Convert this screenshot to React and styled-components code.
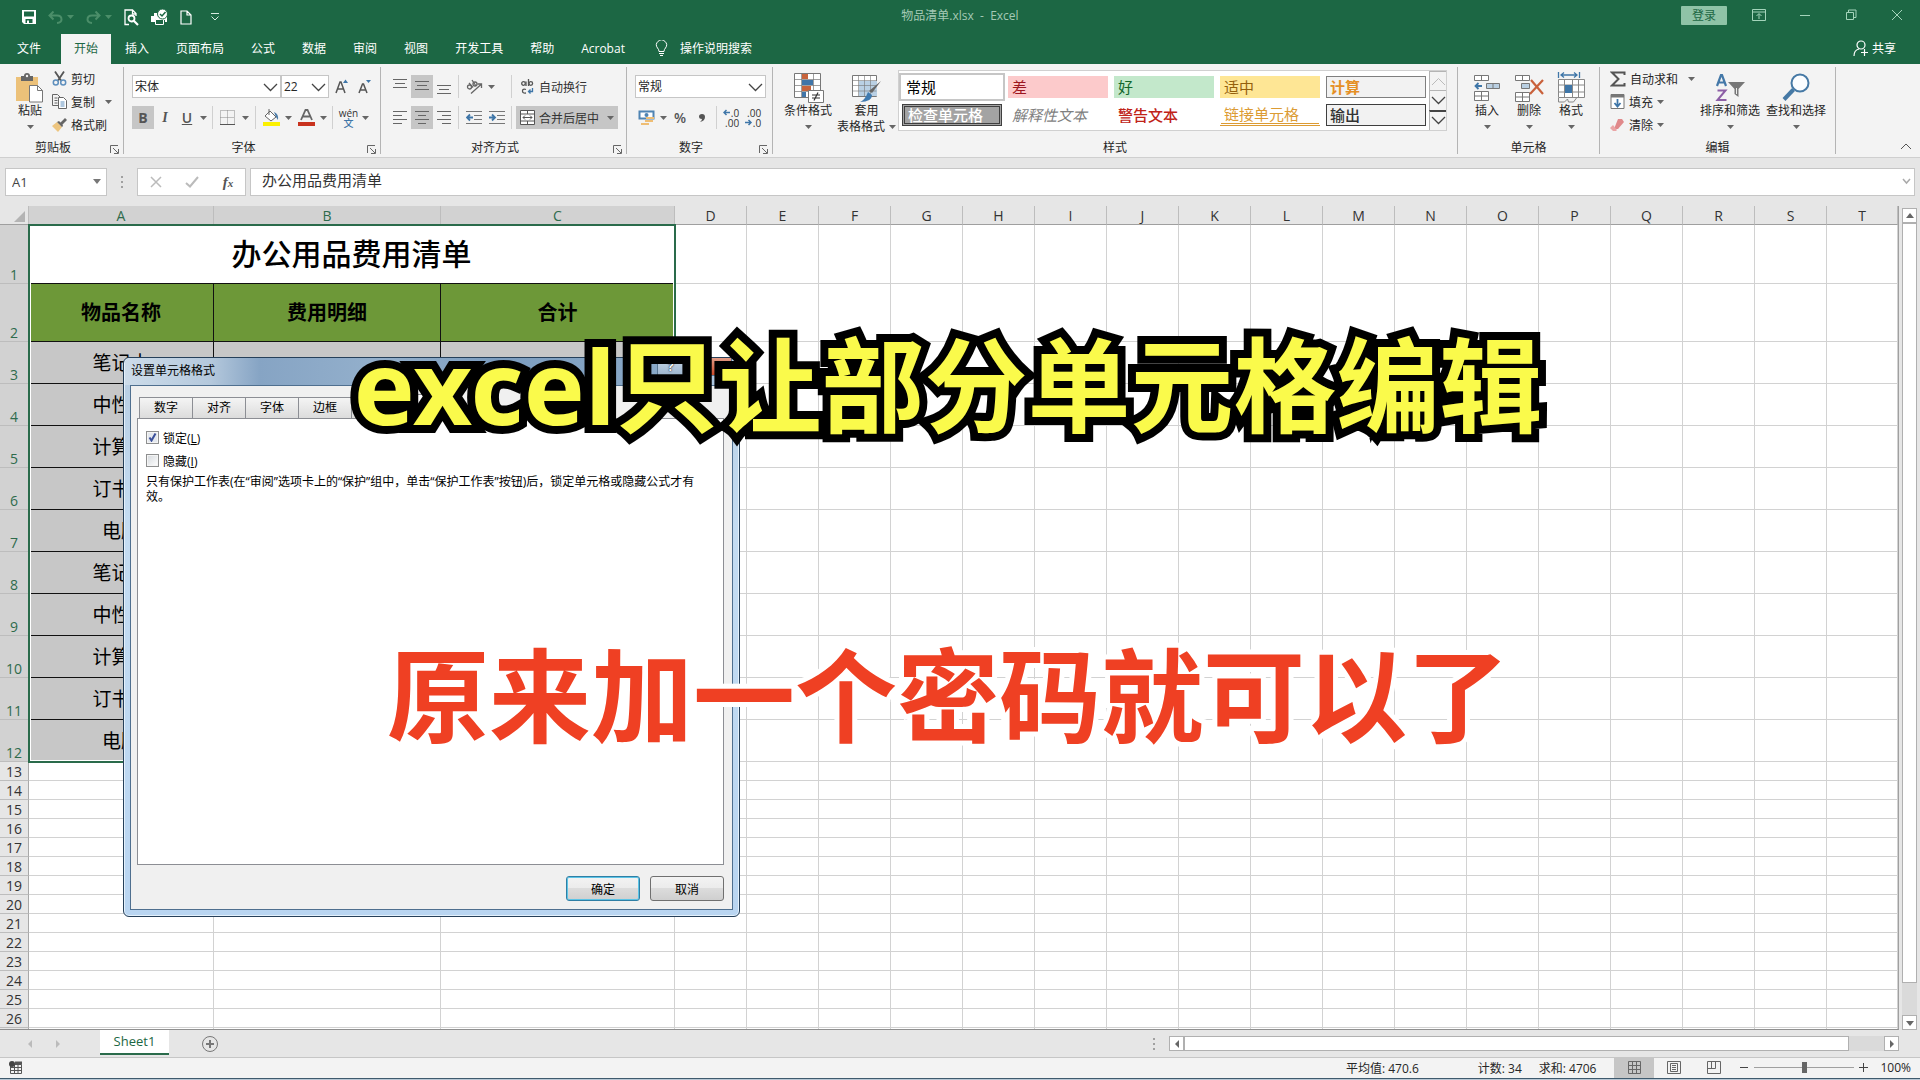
import React, { useState } from 'react';
import styled, { createGlobalStyle, css } from 'styled-components';

const GlobalStyle = createGlobalStyle`
  * {
    box-sizing: border-box;
  }

  body {
    margin: 0;
    overflow: hidden;
    font-family: "Open Sans", "Noto Sans CJK SC", sans-serif;
    font-size: 12px;
    color: #262626;
  }

  button, input, select {
    font: inherit;
    color: inherit;
  }

  button {
    padding: 0;
    border: 0;
    background: none;
    white-space: nowrap;
  }
`;

const MENU = ['插入', '页面布局', '公式', '数据', '审阅', '视图', '开发工具', '帮助', 'Acrobat'];

const COLUMNS = 'ABCDEFGHIJKLMNOPQRST'.split('');
const COLUMN_WIDTHS = { A: 185, B: 227, C: 234 };

const ROWS = [
  { height: 59, cells: ['办公用品费用清单'] },
  { height: 58, cells: ['物品名称', '费用明细', '合计'] },
  { height: 42, cells: ['笔记本', '', ''] },
  { height: 42, cells: ['中性笔', '', ''] },
  { height: 42, cells: ['计算器', '', ''] },
  { height: 42, cells: ['订书机', '', ''] },
  { height: 42, cells: ['电脑', '', ''] },
  { height: 42, cells: ['笔记本', '', ''] },
  { height: 42, cells: ['中性笔', '', ''] },
  { height: 42, cells: ['计算器', '', ''] },
  { height: 42, cells: ['订书机', '', ''] },
  { height: 42, cells: ['电脑', '', ''] },
];
const EMPTY_ROWS = Array.from({ length: 15 }, (_, i) => i + 13);

const CELL_STYLES = [
  { name: '常规', kind: 'normal' },
  { name: '差', kind: 'bad' },
  { name: '好', kind: 'good' },
  { name: '适中', kind: 'neutral' },
  { name: '计算', kind: 'calc' },
  { name: '检查单元格', kind: 'check' },
  { name: '解释性文本', kind: 'explain' },
  { name: '警告文本', kind: 'warning' },
  { name: '链接单元格', kind: 'linked' },
  { name: '输出', kind: 'output' },
];

/* ---------- icons ---------- */

const Svg = ({ w = 16, h = w, children, ...rest }) => (
  <svg width={w} height={h} viewBox={`0 0 ${w} ${h}`} fill="none" stroke="currentColor" aria-hidden="true" {...rest}>
    {children}
  </svg>
);

const Arrow = ({ color = '#666' }) => (
  <Svg w={7} h={4} stroke="none"><path d="M0 0h7L3.5 4z" fill={color} /></Svg>
);

const Chevron = ({ color = '#444' }) => (
  <Svg w={15} h={9} stroke={color} strokeWidth="1.3"><path d="M1 1l6.5 6.5L14 1" /></Svg>
);

const SaveIcon = () => (
  <Svg w={14} stroke="none">
    <path fillRule="evenodd" fill="#fff" d="M0 0h14v14H2l-2-2zM2 1.5v5h10v-5zM3.5 9v4H5v-2.500h2V13h3.500V9z" />
  </Svg>
);

const UndoIcon = ({ flip }) => (
  <Svg w={15} h={13} stroke="#4b8e69" strokeWidth="2">
    <g transform={flip ? 'translate(15 0) scale(-1 1)' : undefined}>
      <path d="M5.500 0.500L1.500 4.500l4 4M2 4.500h7q4.500 0 4.500 4 0 3-4.500 3.500" />
    </g>
  </Svg>
);

const PreviewIcon = () => (
  <Svg w={15} h={17} stroke="#fff" strokeWidth="1.3">
    <path d="M5 15.500H1V1h7.500L12 4.500V7M8.500 1v4H12" />
    <circle cx="7.500" cy="9.500" r="3" strokeWidth="1.800" />
    <path d="M10 12l4 4" strokeWidth="2.200" />
  </Svg>
);

const PrintIcon = () => (
  <Svg w={17} h={17} stroke="none">
    <path d="M0 7h3V4h4v3h9v6h-2v-2H4v2H0z" fill="#fff" />
    <path d="M4.500 10.500h8v5h-8z" stroke="#fff" fill="#1c6744" />
    <circle cx="11.500" cy="5" r="5" fill="#fff" stroke="#1c6744" />
    <path d="M9 5l2 2 3.500-4" stroke="#1c6744" strokeWidth="1.500" />
  </Svg>
);

const FileIcon = () => (
  <Svg w={12} h={15} stroke="#fff" strokeWidth="1.200"><path d="M1 1h6l4 4v9H1zM7 1v4h4" /></Svg>
);

const PasteIcon = () => (
  <Svg w={30} h={30}>
    <path d="M1 4h22v24H1z" fill="#ecc179" stroke="none" />
    <path d="M6 3h3q0-3 3-3t3 3h3v5H6z" fill="#666" stroke="none" />
    <circle cx="12" cy="3" r="1.200" fill="#f3f3f3" stroke="none" />
    <path d="M14.500 12.500h8l5 5v11.500h-13z" fill="#fff" stroke="#777" />
    <path d="M22.500 12.500v5h5" stroke="#777" />
  </Svg>
);

const CutIcon = () => (
  <Svg w={15} h={15} strokeWidth="1.500">
    <path d="M3 0.500l6 9M12 0.500l-6 9" stroke="#555" strokeWidth="1.800" />
    <circle cx="3.800" cy="11.500" r="2.500" stroke="#5e8fbd" />
    <circle cx="11.200" cy="11.500" r="2.500" stroke="#5e8fbd" />
  </Svg>
);

const CopyIcon = () => (
  <Svg w={15} h={15} stroke="#666">
    <path d="M6 11.500H0.500v-11h5l2.500 2.500M2.500 4h3M2.500 6.500h3M2.500 9h3" />
    <path d="M6.500 3.500h5l3 3v8h-8z" fill="#fff" />
    <path d="M8.500 8h4M8.500 10h4M8.500 12h4" stroke="#5e8fbd" />
  </Svg>
);

const BrushIcon = () => (
  <Svg w={15} h={14} stroke="none">
    <path d="M0 8l5-4 5 5-4 5z" fill="#edc57f" />
    <path d="M5 4l2-1 1.500 1.500L13 0l2 2-4.500 4.500L11 8l-1 1z" fill="#666" />
  </Svg>
);

const LauncherIcon = () => (
  <Svg w={9} h={9} stroke="#666"><path d="M0.500 8V0.500H8M3 3l5 5M8.500 4v4.500H4" /></Svg>
);

const BordersIcon = () => (
  <Svg w={15} h={15} stroke="#888">
    <path d="M0.500 0.500h14v14H0.500zM7.500 0.500v14M0.500 7.500h14" strokeDasharray="1 1" />
    <path d="M0 14.500h15" stroke="#555" />
  </Svg>
);

const FillIcon = () => (
  <Svg w={17} h={17}>
    <path d="M7 2l6 6-5 4-6-5z" fill="#fff" stroke="#666" />
    <path d="M6 0v6" stroke="#666" />
    <path d="M11 3q5 2 4 8l-2-3z" fill="#4a7ba8" stroke="none" />
    <path d="M0 13h17v4H0z" fill="#fbf000" stroke="none" />
  </Svg>
);

const FontColorIcon = () => (
  <Svg w={17} h={17} stroke="none">
    <path d="M3 11L7.500 1h2L14 11M5 7.500h7" stroke="#666" strokeWidth="1.800" />
    <path d="M0 13h17v4H0z" fill="#c8321e" />
  </Svg>
);

const SizeIcon = ({ down }) => (
  <Svg w={14} h={15}>
    <path d={down ? 'M1 14L4.500 5h1L9 14M2.500 11h5' : 'M1 14L5 3h1l4 11M2.500 10h6'} stroke="#555" strokeWidth="1.500" />
    <path d={down ? 'M8 1h5l-2.500 3z' : 'M8 4h5l-2.500-3.500z'} fill="#3f76a8" stroke="none" />
  </Svg>
);

/* [start, end, y] of every text line in an alignment icon */
const lineSets = {
  top: [[0, 14, 1], [2, 12, 5], [0, 14, 9]],
  middle: [[0, 14, 3], [2, 12, 7], [0, 14, 11]],
  bottom: [[0, 14, 7], [2, 12, 11], [0, 14, 15]],
  left: [[0, 14, 2], [0, 9, 6], [0, 14, 10], [0, 9, 14]],
  center: [[0, 14, 2], [3, 11, 6], [0, 14, 10], [3, 11, 14]],
  right: [[0, 14, 2], [5, 14, 6], [0, 14, 10], [5, 14, 14]],
};

const AlignIcon = ({ kind }) => (
  <Svg w={14} h={17} stroke="#666">
    {lineSets[kind].map(([a, b, y]) => <path key={y} d={`M${a} ${y + 0.5}H${b}`} />)}
  </Svg>
);

const OrientIcon = () => (
  <Svg w={17} h={16} stroke="#666" strokeWidth="1.300">
    <circle cx="3.500" cy="8" r="2" /><path d="M3 4l4 4.500M6 1l4 6" /><circle cx="9" cy="5" r="2" />
    <path d="M5 14.500l10-9M15.500 9V5h-4" />
  </Svg>
);

const IndentIcon = ({ out }) => (
  <Svg w={16} h={13} stroke="#777">
    <path d="M0 0.500h16M8 4.500h8M8 8.500h8M0 12.500h16" />
    <path d={out ? 'M7 6.500H1M4 3.500L1 6.500l3 3' : 'M0 6.500h6M3 3.500l3 3-3 3'} stroke="#3f76a8" strokeWidth="1.800" />
  </Svg>
);

const WrapIcon = () => (
  <Svg w={13} h={15} stroke="#555" strokeWidth="1.300">
    <circle cx="2.500" cy="4.500" r="1.800" /><path d="M5 2.500v4.500M7.500 0v7" /><circle cx="9.800" cy="4.500" r="1.800" />
    <path d="M5 10.500q-3.500-1-3.500 1.500t3.500 2" />
    <path d="M11.500 9v3.500H8M9.500 10.500l-2 2 2 2" stroke="#3f76a8" />
  </Svg>
);

const MergeIcon = () => (
  <Svg w={15} h={15} stroke="#555">
    <path d="M0.500 0.500h14v14H0.500z" fill="#fff" />
    <path d="M0.500 4h14M0.500 11h14M7.500 0.500V4M7.500 11v3.500M3 7.500h9M5 5.500l-2 2 2 2M10 5.500l2 2-2 2" />
  </Svg>
);

const MoneyIcon = () => (
  <Svg w={17} h={16} stroke="none">
    <path d="M1.500 1.500h14v7h-14z" stroke="#4f84b3" strokeWidth="2" fill="#fff" />
    <circle cx="8.500" cy="5" r="2" fill="#4f84b3" />
    <path d="M8 7h8v2H8zM7 10h8v2H7zM3 13h8v2H3z" fill="#eebd74" />
  </Svg>
);

const CommaIcon = () => (
  <Svg w={6} h={8} stroke="none"><path d="M3 0q3 0 3 3 0 4-5 5 2-1.500 2-3-3 0-3-2.500Q0 0 3 0z" fill="#555" /></Svg>
);

const CondIcon = () => (
  <Svg w={31} h={30} stroke="#777">
    <path d="M1.500 0.500h26v24h-26z" fill="#fff" />
    <path d="M9 1h6v5H9zM9 13h9v5H9z" fill="#c8643c" stroke="none" />
    <path d="M9 7h11v5H9zM9 19h4v5H9z" fill="#4175a8" stroke="none" />
    <path d="M8.500 0.500v24M20.500 0.500v24M1.500 6.500h26M1.500 12.500h26M1.500 18.500h26" opacity=".7" />
    <path d="M15.500 17.500h15v12h-15z" fill="#fff" />
    <path d="M19 22h8M19 25h8M25 19.500l-4 8" stroke="#333" strokeWidth="1.200" />
  </Svg>
);

const TableStyleIcon = () => (
  <Svg w={30} h={30} stroke="#777">
    <path d="M0.500 2.500h24v21h-24z" fill="#fff" />
    <path d="M7 8h18v15H7z" fill="#b9d0e4" stroke="none" />
    <path d="M6.500 2.500v21M12.500 2.500v21M18.500 2.500v21M0.500 7.500h24M0.500 12.500h24M0.500 18h24" opacity=".6" />
    <path d="M29 8L20 20l-3-2z" fill="#666" stroke="none" />
    <path d="M16 19l4 3q0 7-12 7 5-2 8-10z" fill="#3f7ab0" stroke="none" />
  </Svg>
);

const InsertIcon = () => (
  <Svg w={28} h={28} stroke="#777">
    <path d="M1.500 1.500h14v5h-14zM8.500 1.500v5M1.500 17.500h14v9h-14zM8.500 17.500v9M1.500 22h14" fill="#fff" />
    <path d="M13.500 9.500h13v5h-13z" fill="#b9cfe2" /><path d="M20 9.500v5" />
    <path d="M9 12H3M5.500 9L2.500 12l3 3" stroke="#3f76a8" strokeWidth="1.800" />
  </Svg>
);

const DeleteIcon = () => (
  <Svg w={30} h={28} stroke="#777">
    <path d="M1.500 1.500h14v5h-14zM8.500 1.500v5M1.500 18.500h14v9h-14zM8.500 18.500v9M1.500 23h14" fill="#fff" />
    <path d="M7.500 9.500h8v5h-8z" fill="#b9cfe2" />
    <path d="M17 6l12 14M29 6L16 20" stroke="#c9613b" strokeWidth="2.200" />
  </Svg>
);

const FormatIcon = () => (
  <Svg w={29} h={31} stroke="#888">
    <path d="M1.500 7.500h26v18h-26z" fill="#fff" />
    <path d="M1.500 13h26M1.500 20h26M7.500 7.500v18M15.500 7.500v18M21.500 7.500v18" />
    <path d="M8 13h7v8H8z" fill="#3f76a8" stroke="none" />
    <path d="M1.500 26v4h6l3-3 1 3h5l3-4" />
    <path d="M1.500 0v6M22.500 0v6M4 3h16M7 0.500L4 3l3 2.500M17 0.500L20 3l-3 2.500" stroke="#3f76a8" strokeWidth="1.300" />
  </Svg>
);

const SumIcon = () => (
  <Svg w={16} h={16} stroke="#555" strokeWidth="2"><path d="M14.500 4V1.500H2L8.500 8 2 14.500h12.500V12" /></Svg>
);

const DownIcon = () => (
  <Svg w={15} h={15} stroke="#777">
    <path d="M1 0.500h13v14H1z" fill="#fff" /><path d="M1 2h13" strokeWidth="3" />
    <path d="M7.500 5v7M4.500 9l3 3.500 3-3.500" stroke="#3f76a8" strokeWidth="1.800" />
  </Svg>
);

const EraserIcon = () => (
  <Svg w={15} h={14} stroke="none">
    <path d="M8 1h4l2 3-6 7H4z" fill="#e0898b" /><path d="M3 7l4 5-1 1H3L0 10z" fill="#eaa5a6" />
  </Svg>
);

const SortIcon = () => (
  <Svg w={31} h={28}>
    <path d="M2 12L6 1h1l4 11M3.500 8.500h6" stroke="#4478a8" strokeWidth="2.200" />
    <path d="M2.500 16.500h8L2.500 26h9" stroke="#8d5fa6" strokeWidth="2" />
    <path d="M13 8h17l-6.500 7v8l-4-3v-5z" fill="#777" stroke="none" /><path d="M21.500 14v6" stroke="#eee" />
  </Svg>
);

const FindIcon = () => (
  <Svg w={28} h={29} stroke="#4679a5">
    <circle cx="18" cy="10" r="8.500" strokeWidth="2" fill="#fbfdff" />
    <path d="M11.500 16.500L2 26.500" strokeWidth="4" />
  </Svg>
);

/* ---------- styled parts ---------- */

const Page = styled.div`
  display: flex;
  flex-direction: column;
  height: 100vh;
  background: #e6e6e6;
`;

const TitleBar = styled.header`
  display: grid;
  grid-template-columns: 1fr auto 1fr;
  align-items: center;
  height: 34px;
  padding: 0 16px 4px;
  background: #1c6744;
  color: #a4c9b5;
`;

const QuickAccess = styled.div`
  display: flex;
  align-items: center;
  gap: 12px;
  padding: 4px 0 0 6px;

  button {
    display: flex;
    align-items: center;
    gap: 4px;
    color: #d6eadf;
  }
`;

const WindowControls = styled.div`
  display: flex;
  align-items: center;
  justify-content: flex-end;
  gap: 32px;

  button {
    display: flex;
    color: #a4d4bb;
  }

  .login {
    margin-right: -7px;
    padding: 0 11px;
    line-height: 19px;
    border-radius: 1px;
    background: #8fc3a7;
    color: #1c6744;
  }
`;

const MenuBar = styled.nav`
  display: flex;
  gap: 1px;
  height: 30px;
  background: #1c6744;
  color: #fff;
`;

const MenuTab = styled.button`
  padding: 0 13px 2px;
  color: ${({ $active }) => ($active ? '#1c6744' : '#fff')};
  background: ${({ $active }) => ($active ? '#f3f3f3' : 'transparent')};

  &:first-child {
    padding: 0 19px 2px 17px;
  }
`;

const MenuAction = styled.button`
  display: flex;
  align-items: center;
  gap: ${({ $gap }) => $gap}px;
  padding: 0 ${({ $right }) => ($right ? 24 : 0)}px 2px ${({ $right }) => ($right ? 0 : 16)}px;
  margin-left: ${({ $right }) => ($right ? 'auto' : 0)};
  color: #fff;
`;

const Ribbon = styled.div`
  position: relative;
  display: flex;
  height: 94px;
  padding: 3px 0;
  overflow: hidden;
  background: #f3f3f3;
  border-bottom: 1px solid #cfcfcf;
`;

const Group = styled.section`
  position: relative;
  flex: none;
  width: ${({ $width }) => $width}px;
  border-right: 1px solid #b4b4b4;
`;

const GroupBody = styled.div`
  display: flex;
  height: 73px;
  padding: 0 0 0 ${({ $pad = 8 }) => $pad}px;
`;

const GroupFooter = styled.div`
  display: flex;
  align-items: center;
  line-height: 16px;

  span {
    flex: 1;
    text-align: center;
  }

  button {
    display: flex;
    padding: 2px 4px 0;
  }
`;

const ToolRows = styled.div`
  display: flex;
  flex-direction: column;
  gap: 8px;
  padding-top: 8px;
`;

const ToolRow = styled.div`
  display: flex;
  align-items: center;
  height: 23px;
`;

const Tool = styled.button`
  display: flex;
  align-items: center;
  justify-content: center;
  gap: ${({ $gap = 5 }) => $gap}px;
  width: ${({ $width = 22 }) => $width}px;
  height: 23px;
  color: #333;
  background: ${({ $on }) => ($on ? '#c6c6c6' : 'transparent')};
`;

const Letter = styled.span`
  font-size: 14px;
  font-weight: ${({ $kind }) => ($kind === 'bold' ? 700 : 600)};
  font-style: ${({ $kind }) => ($kind === 'italic' ? 'italic' : 'normal')};
  font-family: ${({ $kind }) => ($kind === 'italic' ? '"Liberation Serif", serif' : 'inherit')};
  text-decoration: ${({ $kind }) => ($kind === 'underline' ? 'underline' : 'none')};
  color: #555;
`;

const Pinyin = styled.span`
  display: flex;
  flex-direction: column;
  align-items: center;
  font-size: 10px;
  line-height: 10px;

  b {
    color: #3f76a8;
    font-weight: 500;
  }
`;

const Decimals = styled.span`
  display: flex;
  flex-direction: column;
  align-items: flex-end;
  font-size: 10px;
  line-height: 10px;

  span {
    display: flex;
    align-items: center;
  }
`;

const Divider = styled.span`
  width: 1px;
  height: 23px;
  margin: 0 ${({ $after = 3 }) => $after}px 0 ${({ $before = 3 }) => $before}px;
  background: #d0d0d0;
`;

const SelectBox = styled.label`
  position: relative;
  display: block;
  width: ${({ $width }) => $width}px;
  height: 23px;

  select {
    appearance: none;
    width: 100%;
    height: 23px;
    padding: 0 2px;
    border: 1px solid #c6c6c6;
    border-radius: 0;
    background: #fff;
  }

  svg {
    position: absolute;
    right: 3px;
    top: 8px;
    pointer-events: none;
  }
`;

const SmallTools = styled.div`
  display: flex;
  flex-direction: column;
`;

const SmallTool = styled.button`
  display: flex;
  align-items: center;
  gap: 4px;
  height: 23px;

  svg:last-child {
    margin-left: ${({ $spread }) => ($spread ? 6 : 0)}px;
  }
`;

const BigTool = styled.button`
  display: flex;
  flex-direction: column;
  align-items: center;
  flex: none;
  width: ${({ $width = 42 }) => $width}px;
  padding-top: 5px;
  line-height: 16px;

  .pic {
    display: flex;
    align-items: center;
    height: 31px;
  }

  .more {
    display: flex;
    align-items: center;
    gap: 4px;
    height: 15px;
  }
`;

const Gallery = styled.div`
  display: flex;
  height: 61px;
  margin-top: 3px;
  background: #fff;
  border: 1px solid #d0d0d0;
`;

const GalleryGrid = styled.div`
  display: grid;
  grid-template-columns: repeat(5, 100px);
  grid-auto-rows: 22px;
  gap: 6px;
  padding: 5px 3px;
`;

const swatches = {
  normal: css`color: #000; outline: 2px solid #c6c6c6; outline-offset: 1px;`,
  bad: css`color: #9c1620; background: #fccacb;`,
  good: css`color: #13672b; background: #c3e8cb;`,
  neutral: css`color: #94600c; background: #fee695;`,
  calc: css`color: #e58f25; font-weight: 700; background: #f2f2f2; border-color: #7f7f7f;`,
  check: css`color: #fff; font-weight: 500; background: #a3a3a3; border: 3px double #3f3f3f;`,
  explain: css`color: #7f7f7f; font-style: italic;`,
  warning: css`color: #c02318; font-weight: 500;`,
  linked: css`color: #dc9b33; border-bottom: 3px double #dc9b33;`,
  output: css`color: #333; font-weight: 500; background: #f2f2f2; border-color: #3f3f3f;`,
};

const Swatch = styled.button`
  padding: 0 3px;
  overflow: hidden;
  border: 1px solid transparent;
  font-size: 15px;
  line-height: 16px;
  text-align: left;
  ${({ $kind }) => swatches[$kind]}
`;

const GalleryScroll = styled.div`
  display: flex;
  flex-direction: column;
  width: 17px;
  background: #f3f3f3;

  button {
    flex: 1;
    display: flex;
    align-items: center;
    justify-content: center;
    border: 1px solid #b4b4b4;
    border-width: 1px 0 0 1px;
  }

  button:last-child {
    border-top: 2px solid #444;
  }
`;

const CollapseButton = styled.button`
  align-self: flex-end;
  margin: 0 8px 0 auto;
`;

const FormulaBar = styled.div`
  display: flex;
  align-items: center;
  height: 48px;
  padding: 0 5px 0 5px;
`;

const NameBox = styled.label`
  position: relative;
  width: 102px;
  height: 28px;

  input {
    width: 100%;
    height: 28px;
    padding: 0 6px;
    border: 1px solid #c6c6c6;
    background: #fff;
    font-size: 13px;
    color: #444;
  }

  svg {
    position: absolute;
    right: 6px;
    top: 11px;
  }
`;

const Dots = styled.span`
  width: 2px;
  height: 12px;
  margin: 0 14px 0 ${({ $end }) => ($end ? 'auto' : '14px')};
  background: repeating-linear-gradient(#a0a0a0 0 2px, transparent 2px 5px);
`;

const FormulaButtons = styled.div`
  display: flex;
  align-items: center;
  justify-content: space-around;
  width: 109px;
  height: 28px;
  margin-right: 4px;
  border: 1px solid #c6c6c6;
  background: #fff;

  button {
    display: flex;
  }
`;

const Fx = styled.span`
  font: italic 600 15px "Liberation Serif", serif;
  color: #555;

  small {
    font-size: 11px;
  }
`;

const FormulaInput = styled.label`
  position: relative;
  flex: 1;
  height: 28px;

  input {
    width: 100%;
    height: 28px;
    padding: 0 11px 5px;
    border: 1px solid #c6c6c6;
    background: #fff;
    font-size: 15px;
    color: #333;
  }

  svg {
    position: absolute;
    right: 4px;
    top: 10px;
  }
`;

const Sheet = styled.main`
  position: relative;
  flex: 1;
  display: flex;
  min-height: 0;
`;

const GridArea = styled.div`
  position: relative;
  flex: 1;
  overflow: hidden;
  border-right: 1px solid #a0a0a0;
  border-bottom: 1px solid #8f8f8f;
  background: #fff;
`;

const Grid = styled.table`
  table-layout: fixed;
  width: 100%;
  border-collapse: separate;
  border-spacing: 0;
  font-size: 14px;
  line-height: 16px;

  th, td {
    padding: 0;
    overflow: hidden;
    font-weight: 400;
  }
`;

const ColHead = styled.th`
  height: 19px;
  vertical-align: bottom;
  border-right: 1px solid #bdbdbd;
  border-bottom: 1px solid #9f9f9f;
  background: ${({ $on }) => ($on ? '#d2d2d2' : '#e6e6e6')};
  color: ${({ $on }) => ($on ? '#2e6b4c' : '#333')};

  svg {
    display: block;
  }
`;

const RowHead = styled.th`
  vertical-align: bottom;
  border-right: 1px solid #a8a8a8;
  border-bottom: 1px solid #bdbdbd;
  background: ${({ $on }) => ($on ? '#d2d2d2' : '#e6e6e6')};
  color: ${({ $on }) => ($on ? '#2e6b4c' : '#333')};
`;

const Cell = styled.td`
  border-right: 1px solid #d2d2d2;
  border-bottom: 1px solid #d2d2d2;
`;

const fills = { title: '#fff', head: '#6d9838', body: '#c7c7c7' };

const DataCell = styled.td`
  border-right: 1px solid #111;
  border-bottom: 1px solid #111;
  background: ${({ $kind }) => fills[$kind]};
  color: #000;
  text-align: center;
  font-size: ${({ $kind }) => ({ title: 30, head: 20, body: 19 }[$kind])}px;
  line-height: 30px;

  span {
    font-weight: ${({ $kind }) => ({ title: 500, head: 700, body: 400 }[$kind])};
  }
`;

/* green frame over the selected range A1:C12 */
const Selection = styled.div`
  position: absolute;
  left: 28px;
  top: 18px;
  width: 648px;
  height: 539px;
  border: 2px solid #2a6b4b;
  box-shadow: inset 0 0 0 1px #fff;
`;

const VScroll = styled.div`
  display: flex;
  flex-direction: column;
  width: 21px;
  padding: 2px 3px 0;

  button {
    display: flex;
    align-items: center;
    justify-content: center;
    height: 15px;
    border: 1px solid #b0b0b0;
    background: #fff;
  }

  .track {
    flex: 1;
    background: #dadada;
  }

  .thumb {
    height: 96%;
    border: 1px solid #b0b0b0;
    background: #fff;
  }
`;

const SheetBar = styled.div`
  display: flex;
  align-items: center;
  height: 27px;
  padding-right: 21px;
`;

const SheetNav = styled.div`
  display: flex;
  gap: 22px;
  width: 100px;
  padding-left: 27px;

  button {
    display: flex;
  }
`;

const SheetTab = styled.button`
  align-self: flex-start;
  width: 69px;
  height: 25px;
  padding-bottom: 2px;
  background: #fff;
  border-bottom: 2px solid #2a6b4b;
  font-size: 13px;
  font-weight: 500;
  color: #1c6744;
`;

const AddSheet = styled.button`
  display: flex;
  margin-left: 32px;
`;

const HScroll = styled.div`
  display: flex;
  width: 730px;
  height: 15px;

  button {
    display: flex;
    align-items: center;
    justify-content: center;
    width: 15px;
    border: 1px solid #b0b0b0;
    background: #fff;
  }

  .track {
    flex: 1;
    background: #dadada;
  }

  .thumb {
    width: 95%;
    height: 15px;
    border: 1px solid #b0b0b0;
    background: #fff;
  }
`;

const StatusBar = styled.footer`
  display: flex;
  align-items: center;
  height: 21px;
  padding: 0 9px 1px;
  background: #f3f3f3;
  border-top: 1px solid #c6c6c6;

  .record {
    margin-right: auto;
    display: flex;
  }
`;

const Stat = styled.span`
  margin-right: ${({ $gap }) => $gap}px;
`;

const ViewButton = styled.button`
  display: flex;
  align-items: center;
  justify-content: center;
  width: 40px;
  height: 20px;
  background: ${({ $on }) => ($on ? '#c6c6c6' : 'transparent')};
`;

const Zoom = styled.label`
  display: flex;
  align-items: center;
  gap: 5px;
  margin: 0 12px 0 6px;

  input {
    appearance: none;
    width: 100px;
    height: 14px;
    margin: 0;
    background: linear-gradient(#a0a0a0, #a0a0a0) center / 100% 1px no-repeat;
  }

  input::-webkit-slider-thumb {
    appearance: none;
    width: 5px;
    height: 11px;
    background: #666;
  }
`;

const TaskStrip = styled.div`
  height: 2px;
  background: #3f5a6d;
  border-bottom: 1px solid #b7c7d4;
`;

const Dialog = styled.div`
  position: absolute;
  left: 123px;
  top: 151px;
  display: flex;
  flex-direction: column;
  width: 617px;
  height: 560px;
  padding: 0 6px 6px;
  border: 1px solid #26405a;
  border-radius: 6px;
  background: linear-gradient(#b7cde2, #c4dcf2 30%, #b9d5f1);
  box-shadow: inset 0 0 0 1px #e4f1fc;
`;

const DialogTitle = styled.div`
  display: flex;
  align-items: flex-start;
  justify-content: space-between;
  height: 27px;
  margin: 0 -5px;
  padding: 0 6px;
  border-radius: 5px 5px 0 0;
  background: linear-gradient(90deg, #cddcea, #b4c8dc 14%, #86a4c4 22%, #94b0cc 42%, #7c9dbf 60%, #8aa9c8 88%, #c0d5ea);
  color: #000;

  h2 {
    margin: 4px 0 0;
    font-size: 12px;
    line-height: 18px;
    font-weight: 400;
  }
`;

const DialogButtons = styled.div`
  display: flex;

  button {
    width: 27px;
    height: 18px;
    border: 1px solid #5a7894;
    border-top: 0;
    background: linear-gradient(#c8d8e8, #9db5cd);
    color: #fff;
    font-weight: 700;
    line-height: 14px;
    text-shadow: 0 0 2px #223, 0 0 1px #223;
  }

  .close {
    width: 48px;
    border-radius: 0 0 4px 0;
    background: linear-gradient(#e29c86, #cc4a2a);
  }
`;

const DialogBody = styled.div`
  display: flex;
  flex-direction: column;
  flex: 1;
  padding: 8px 8px 8px 6px;
  border: 1px solid #4f6f8f;
  background: #f0f0f0;
`;

const DialogTabs = styled.div`
  display: flex;
  align-items: flex-end;
  height: 24px;
  padding-left: 2px;
`;

const DialogTab = styled.button`
  width: 54px;
  height: ${({ $active }) => ($active ? 24 : 21)}px;
  border: 1px solid #8c8e94;
  border-bottom: 0;
  margin-right: -1px;
  padding-bottom: 2px;
  background: ${({ $active }) => ($active ? '#fff' : 'linear-gradient(#f4f4f4, #dcdcdc)')};
  color: #000;
`;

const DialogPanel = styled.div`
  flex: 1;
  padding: 7px 18px 0 8px;
  border: 1px solid #8c8e94;
  background: #fff;
  color: #000;

  p {
    margin: 2px 0 0;
    line-height: 15px;
  }
`;

const CheckRow = styled.label`
  display: flex;
  align-items: center;
  gap: 4px;
  height: 23px;

  input {
    appearance: none;
    width: 13px;
    height: 13px;
    margin: 0;
    border: 1px solid #8e8f8f;
    background: linear-gradient(135deg, #d4d8dc, #fff);
    box-shadow: inset 0 0 0 1px #f4f4f4;
  }

  input:checked {
    background: url("data:image/svg+xml,%3Csvg xmlns='http://www.w3.org/2000/svg' width='11' height='11'%3E%3Cpath d='M2.500 5.500l2 3 4-7' fill='none' stroke='%233a4f9a' stroke-width='2'/%3E%3C/svg%3E") #e4e8ee;
  }
`;

const DialogActions = styled.div`
  display: flex;
  justify-content: flex-end;
  gap: 10px;
  padding-top: 11px;

  button {
    width: 74px;
    height: 25px;
    border: 1px solid #707070;
    border-radius: 3px;
    background: linear-gradient(#f3f3f3, #ebebeb 49%, #dcdcdc 50%, #cfcfcf);
    color: #000;
  }

  button:first-child {
    border-color: #2f7fa5;
    box-shadow: inset 0 0 0 1px #5cc4e6;
  }
`;

const Captions = styled.div`
  position: absolute;
  inset: 312px 0 auto 0;
  display: flex;
  flex-direction: column;
  align-items: center;
  gap: 165px;
  padding-right: 24px;
  pointer-events: none;
`;

const Caption = styled.div`
  font-family: "Noto Sans", "Noto Sans CJK SC", sans-serif;
  font-size: ${({ $size }) => $size}px;
  font-weight: 700;
  line-height: 146px;
  white-space: nowrap;
  color: ${({ $color }) => $color};
  -webkit-text-stroke: ${({ $stroke }) => $stroke};
  paint-order: stroke fill;
  stroke-linejoin: round;
`;

/* ---------- page ---------- */

const Footer = ({ children, launcher }) => (
  <GroupFooter>
    <span>{children}</span>
    {launcher && <button aria-label={`${children}设置`}><LauncherIcon /></button>}
  </GroupFooter>
);

const Select = ({ label, width, value }) => (
  <SelectBox $width={width}>
    <select aria-label={label} defaultValue={value}><option>{value}</option></select>
    <Chevron />
  </SelectBox>
);

const ScrollArrow = ({ d }) => <Svg w={8} h={8} stroke="none"><path d={d} fill="#666" /></Svg>;

const BlueArrow = ({ flip }) => (
  <Svg w={8} h={7} stroke="#3f76a8" strokeWidth="1.5">
    <path d={flip ? 'M0 3.5h6M3.500 1L6 3.500 3.500 6' : 'M7 3.500H1M3.500 1L1 3.500 3.500 6'} />
  </Svg>
);

const RibbonBar = () => (
  <Ribbon>
    <Group $width={124}>
      <GroupBody>
        <BigTool $width={44}>
          <span className="pic"><PasteIcon /></span>
          粘贴
          <span className="more"><Arrow /></span>
        </BigTool>
        <SmallTools>
          <SmallTool><CutIcon />剪切</SmallTool>
          <SmallTool $spread><CopyIcon />复制<Arrow /></SmallTool>
          <SmallTool><BrushIcon />格式刷</SmallTool>
        </SmallTools>
      </GroupBody>
      <Footer launcher>剪贴板</Footer>
    </Group>

    <Group $width={257}>
      <GroupBody>
        <ToolRows>
          <ToolRow>
            <Select label="字体" width={149} value="宋体" />
            <Select label="字号" width={48} value="22" />
            <Tool $width={26} aria-label="增大字号"><SizeIcon /></Tool>
            <Tool $width={20} aria-label="减小字号"><SizeIcon down /></Tool>
          </ToolRow>
          <ToolRow>
            <Tool $on><Letter $kind="bold">B</Letter></Tool>
            <Tool><Letter $kind="italic">I</Letter></Tool>
            <Tool><Letter $kind="underline">U</Letter></Tool>
            <Tool $width={10} aria-label="下划线选项"><Arrow /></Tool>
            <Divider $before={4} />
            <Tool $width={36} $gap={7} aria-label="边框"><BordersIcon /><Arrow /></Tool>
            <Divider />
            <Tool $width={36} aria-label="填充颜色"><FillIcon /><Arrow /></Tool>
            <Tool $width={34} aria-label="字体颜色"><FontColorIcon /><Arrow /></Tool>
            <Divider />
            <Tool $width={36} $gap={4}><Pinyin>wén<b>文</b></Pinyin><Arrow /></Tool>
          </ToolRow>
        </ToolRows>
      </GroupBody>
      <Footer launcher>字体</Footer>
    </Group>

    <Group $width={246}>
      <GroupBody>
        <ToolRows>
          <ToolRow>
            <Tool aria-label="顶端对齐"><AlignIcon kind="top" /></Tool>
            <Tool $on aria-label="垂直居中"><AlignIcon kind="middle" /></Tool>
            <Tool aria-label="底端对齐"><AlignIcon kind="bottom" /></Tool>
            <Divider />
            <Tool $width={36} aria-label="方向"><OrientIcon /><Arrow /></Tool>
            <Divider $before={13} $after={4} />
            <Tool $width={76}><WrapIcon />自动换行</Tool>
          </ToolRow>
          <ToolRow>
            <Tool aria-label="左对齐"><AlignIcon kind="left" /></Tool>
            <Tool $on aria-label="居中"><AlignIcon kind="center" /></Tool>
            <Tool aria-label="右对齐"><AlignIcon kind="right" /></Tool>
            <Divider />
            <Tool $width={23} aria-label="减少缩进"><IndentIcon out /></Tool>
            <Tool $width={23} aria-label="增加缩进"><IndentIcon /></Tool>
            <Divider $after={4} />
            <Tool $on $width={102} $gap={4}><MergeIcon />合并后居中<span /><Arrow /></Tool>
          </ToolRow>
        </ToolRows>
      </GroupBody>
      <Footer launcher>对齐方式</Footer>
    </Group>

    <Group $width={146}>
      <GroupBody>
        <ToolRows>
          <ToolRow><Select label="数字格式" width={131} value="常规" /></ToolRow>
          <ToolRow>
            <Tool $width={34} aria-label="会计数字格式"><MoneyIcon /><Arrow /></Tool>
            <Tool><Letter>%</Letter></Tool>
            <Tool aria-label="千位分隔样式"><CommaIcon /></Tool>
            <Divider />
            <Tool><Decimals><span><BlueArrow />.0</span><span>.00</span></Decimals></Tool>
            <Tool><Decimals><span>.00</span><span><BlueArrow flip />.0</span></Decimals></Tool>
          </ToolRow>
        </ToolRows>
      </GroupBody>
      <Footer launcher>数字</Footer>
    </Group>

    <Group $width={685}>
      <GroupBody>
        <BigTool $width={54}>
          <span className="pic"><CondIcon /></span>
          条件格式
          <span className="more"><Arrow /></span>
        </BigTool>
        <BigTool $width={63}>
          <span className="pic"><TableStyleIcon /></span>
          套用
          <span className="more">表格格式<Arrow /></span>
        </BigTool>
        <Gallery>
          <GalleryGrid>
            {CELL_STYLES.map((s) => <Swatch key={s.kind} $kind={s.kind}>{s.name}</Swatch>)}
          </GalleryGrid>
          <GalleryScroll>
            <button aria-label="上一行"><Svg w={15} h={9} stroke="#bbb"><path d="M1 8l6.500-6.500L14 8" /></Svg></button>
            <button aria-label="下一行"><Chevron /></button>
            <button aria-label="其他"><Chevron /></button>
          </GalleryScroll>
        </Gallery>
      </GroupBody>
      <Footer>样式</Footer>
    </Group>

    <Group $width={142}>
      <GroupBody>
        <BigTool><span className="pic"><InsertIcon /></span>插入<span className="more"><Arrow /></span></BigTool>
        <BigTool><span className="pic"><DeleteIcon /></span>删除<span className="more"><Arrow /></span></BigTool>
        <BigTool><span className="pic"><FormatIcon /></span>格式<span className="more"><Arrow /></span></BigTool>
      </GroupBody>
      <Footer>单元格</Footer>
    </Group>

    <Group $width={236}>
      <GroupBody $pad={10}>
        <SmallTools>
          <SmallTool $spread><SumIcon />自动求和<Arrow /></SmallTool>
          <SmallTool><DownIcon />填充<Arrow /></SmallTool>
          <SmallTool><EraserIcon />清除<Arrow /></SmallTool>
        </SmallTools>
        <BigTool $width={70}><span className="pic"><SortIcon /></span>排序和筛选<span className="more"><Arrow /></span></BigTool>
        <BigTool $width={62}><span className="pic"><FindIcon /></span>查找和选择<span className="more"><Arrow /></span></BigTool>
      </GroupBody>
      <Footer>编辑</Footer>
    </Group>

    <CollapseButton aria-label="折叠功能区">
      <Svg w={12} h={8} stroke="#555"><path d="M1 7l5-5 5 5" /></Svg>
    </CollapseButton>
  </Ribbon>
);

const rowKind = (i) => ['title', 'head'][i] || 'body';

const Spreadsheet = () => (
  <GridArea>
    <Grid>
      <colgroup>
        <col width={29} />
        {COLUMNS.map((c) => <col key={c} width={c === 'T' ? undefined : COLUMN_WIDTHS[c] || 72} />)}
      </colgroup>
      <thead>
        <tr>
          <ColHead>
            <Svg w={27} h={16} stroke="none"><path d="M25 3v11H14z" fill="#b4b4b4" /></Svg>
          </ColHead>
          {COLUMNS.map((c) => <ColHead key={c} $on={c in COLUMN_WIDTHS}>{c}</ColHead>)}
        </tr>
      </thead>
      <tbody>
        {ROWS.map((row, i) => (
          <tr key={i} style={{ height: row.height }}>
            <RowHead $on>{i + 1}</RowHead>
            {row.cells.map((text, j) => (
              <DataCell key={j} $kind={rowKind(i)} colSpan={i === 0 ? 3 : 1}><span>{text}</span></DataCell>
            ))}
            {COLUMNS.slice(3).map((c) => <Cell key={c} />)}
          </tr>
        ))}
        {EMPTY_ROWS.map((n) => (
          <tr key={n} style={{ height: 19 }}>
            <RowHead>{n < 27 ? n : ''}</RowHead>
            {COLUMNS.map((c) => <Cell key={c} />)}
          </tr>
        ))}
      </tbody>
    </Grid>
    <Selection />
  </GridArea>
);

const FormatDialog = () => {
  const [locked, setLocked] = useState(true);
  const [hidden, setHidden] = useState(false);

  return (
    <Dialog role="dialog" aria-label="设置单元格格式">
      <DialogTitle>
        <h2>设置单元格格式</h2>
        <DialogButtons>
          <button>?</button>
          <button className="close" aria-label="关闭" />
        </DialogButtons>
      </DialogTitle>
      <DialogBody>
        <DialogTabs>
          {['数字', '对齐', '字体', '边框', '填充', '保护'].map((t) => (
            <DialogTab key={t} $active={t === '保护'}>{t}</DialogTab>
          ))}
        </DialogTabs>
        <DialogPanel>
          <CheckRow>
            <input type="checkbox" checked={locked} onChange={(e) => setLocked(e.target.checked)} />
            <span>锁定(<u>L</u>)</span>
          </CheckRow>
          <CheckRow>
            <input type="checkbox" checked={hidden} onChange={(e) => setHidden(e.target.checked)} />
            <span>隐藏(<u>I</u>)</span>
          </CheckRow>
          <p>只有保护工作表(在“审阅”选项卡上的“保护”组中，单击“保护工作表”按钮)后，锁定单元格或隐藏公式才有效。</p>
        </DialogPanel>
        <DialogActions>
          <button>确定</button>
          <button>取消</button>
        </DialogActions>
      </DialogBody>
    </Dialog>
  );
};

const App = () => (
  <Page>
    <GlobalStyle />
    <TitleBar>
      <QuickAccess>
        <button aria-label="保存"><SaveIcon /></button>
        <button aria-label="撤消"><UndoIcon /><Arrow color="#4b8e69" /></button>
        <button aria-label="恢复"><UndoIcon flip /><Arrow color="#4b8e69" /></button>
        <button aria-label="打印预览"><PreviewIcon /></button>
        <button aria-label="快速打印"><PrintIcon /></button>
        <button aria-label="新建"><FileIcon /></button>
        <button aria-label="自定义">
          <Svg w={24} h={8}><path d="M7 0.500h8M7.500 3.500l3.500 3.500 3.500-3.500" /></Svg>
        </button>
      </QuickAccess>
      <span>物品清单.xlsx&nbsp; -&nbsp; Excel</span>
      <WindowControls>
        <button className="login">登录</button>
        <button aria-label="功能区显示选项">
          <Svg w={14} h={12}><path d="M0.500 0.500h13v11H0.500zM0.500 3h13M7 10V5M4.500 7L7 4.500 9.500 7" /></Svg>
        </button>
        <button aria-label="最小化"><Svg w={14} h={12}><path d="M2 6.500h10" /></Svg></button>
        <button aria-label="还原"><Svg w={14} h={12}><path d="M2.500 3.500h7v7h-7zM4.500 3V1h7.500v7.500h-2" /></Svg></button>
        <button aria-label="关闭"><Svg w={14} h={12}><path d="M2 1l10 10M12 1L2 11" /></Svg></button>
      </WindowControls>
    </TitleBar>
    <MenuBar>
      <MenuTab>文件</MenuTab>
      <MenuTab $active>开始</MenuTab>
      {MENU.map((m) => <MenuTab key={m}>{m}</MenuTab>)}
      <MenuAction $gap={12}>
        <Svg w={13} h={17} stroke="#fff">
          <path d="M4 11.500Q4 9.500 2.500 8A5 5 0 1 1 10.500 8Q9 9.500 9 11.500zM4 13.500h5M5 15.500h3" />
        </Svg>
        操作说明搜索
      </MenuAction>
      <MenuAction $gap={3} $right>
        <Svg w={16} h={17} stroke="#fff" strokeWidth="1.200">
          <circle cx="8" cy="5" r="4" /><path d="M1 16q0-6 5-7M11.500 9v7M8 12.500h7" />
        </Svg>
        共享
      </MenuAction>
    </MenuBar>
    <RibbonBar />
    <FormulaBar>
      <NameBox>
        <input aria-label="名称框" defaultValue="A1" />
        <Svg w={8} h={5} stroke="none"><path d="M0 0h8L4 5z" fill="#777" /></Svg>
      </NameBox>
      <Dots />
      <FormulaButtons>
        <button aria-label="取消"><Svg w={12} h={12} stroke="#bbb" strokeWidth="1.500"><path d="M1 1l10 10M11 1L1 11" /></Svg></button>
        <button aria-label="输入"><Svg w={14} h={12} stroke="#bbb" strokeWidth="2"><path d="M1 7l4 3.500L13 1" /></Svg></button>
        <button><Fx>f<small>x</small></Fx></button>
      </FormulaButtons>
      <FormulaInput>
        <input aria-label="编辑栏" defaultValue="办公用品费用清单" />
        <Svg w={9} h={7} stroke="#aaa" strokeWidth="1.500"><path d="M1 1l3.500 4L8 1" /></Svg>
      </FormulaInput>
    </FormulaBar>
    <Sheet>
      <Spreadsheet />
      <VScroll>
        <button aria-label="向上"><ScrollArrow d="M0 6h8L4 1z" /></button>
        <div className="track"><div className="thumb" /></div>
        <button aria-label="向下"><ScrollArrow d="M0 2h8L4 7z" /></button>
      </VScroll>
      <FormatDialog />
    </Sheet>
    <SheetBar>
      <SheetNav>
        <button aria-label="上一张"><Svg w={6} h={8} stroke="none"><path d="M5 0v8L1 4z" fill="#bbb" /></Svg></button>
        <button aria-label="下一张"><Svg w={6} h={8} stroke="none"><path d="M1 0v8l4-4z" fill="#bbb" /></Svg></button>
      </SheetNav>
      <SheetTab>Sheet1</SheetTab>
      <AddSheet aria-label="新工作表">
        <Svg w={18} h={18} stroke="#777"><circle cx="9" cy="9" r="7.500" /><path d="M9 5v8M5 9h8" strokeWidth="2" /></Svg>
      </AddSheet>
      <Dots $end />
      <HScroll>
        <button aria-label="向左"><ScrollArrow d="M6 0v8L2 4z" /></button>
        <div className="track"><div className="thumb" /></div>
        <button aria-label="向右"><ScrollArrow d="M2 0v8l4-4z" /></button>
      </HScroll>
    </SheetBar>
    <StatusBar>
      <button className="record" aria-label="录制宏">
        <Svg w={13} h={13} stroke="#555">
          <path d="M1.500 3.500h11v9h-11zM2 6.500h10M2 9.500h10M5.500 4v8M9 4v8" /><path d="M6 2h7" strokeWidth="3" />
          <circle cx="3" cy="3" r="3" fill="#444" stroke="none" />
        </Svg>
      </button>
      <Stat $gap={59}>平均值: 470.6</Stat>
      <Stat $gap={17}>计数: 34</Stat>
      <Stat $gap={18}>求和: 4706</Stat>
      <ViewButton $on aria-label="普通"><Svg w={13} h={13} stroke="#666"><path d="M0.500 0.500h12v12H0.500zM4.500 0.500v12M8.500 0.500v12M0.500 4.500h12M0.500 8.500h12" /></Svg></ViewButton>
      <ViewButton aria-label="页面布局"><Svg w={14} h={13} stroke="#666"><path d="M0.500 0.500h13v12H0.500zM3.500 2.500h7v8h-7zM5 4.500h4M5 6.500h4M5 8.500h4" /></Svg></ViewButton>
      <ViewButton aria-label="分页预览"><Svg w={14} h={13} stroke="#666"><path d="M0.500 0.500h13v12H0.500zM4.500 0.500v7M0.500 7.500h8v-7" /></Svg></ViewButton>
      <Zoom>
        <Svg w={9} h={9} stroke="#444"><path d="M0 4.500h8" /></Svg>
        <input type="range" aria-label="缩放" min="0" max="100" defaultValue="50" />
        <Svg w={9} h={9} stroke="#444"><path d="M0 4.500h9M4.500 0v9" /></Svg>
      </Zoom>
      <span>100%</span>
    </StatusBar>
    <TaskStrip />
    <Captions>
      <Caption $size={103} $color="#fafa4b" $stroke="16px #000">excel只让部分单元格编辑</Caption>
      <Caption $size={102} $color="#ef4023" $stroke="10px #fff">原来加一个密码就可以了</Caption>
    </Captions>
  </Page>
);

export default App;
